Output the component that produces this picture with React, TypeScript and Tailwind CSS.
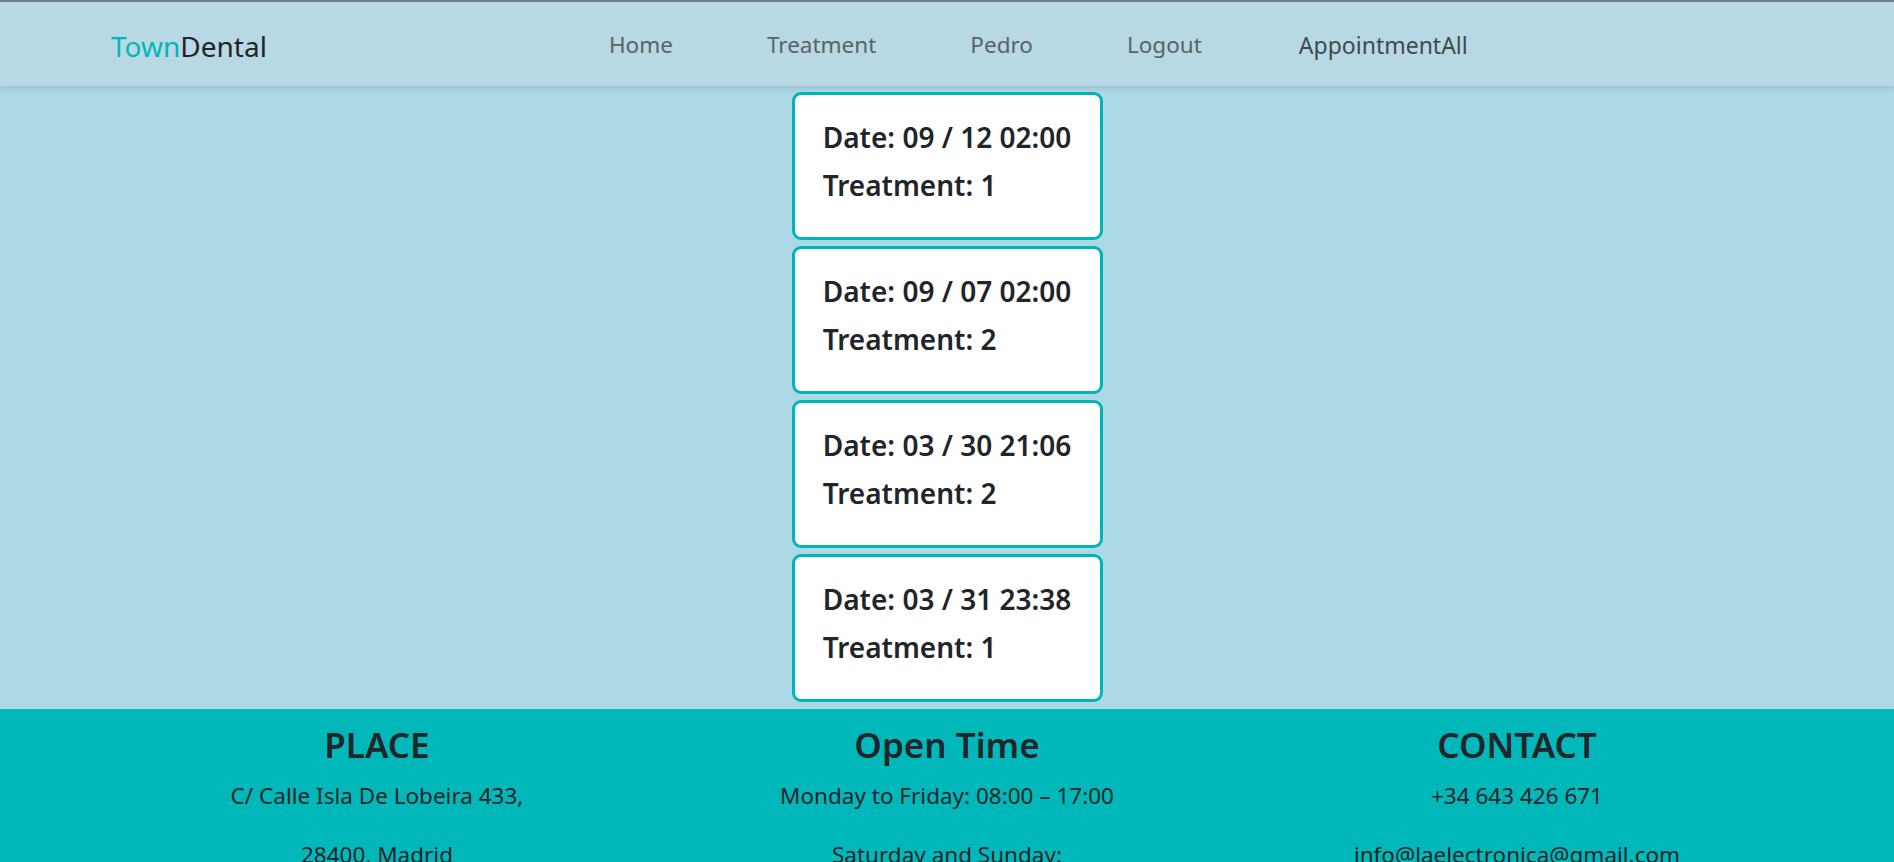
import { FC } from "react";

const font = { fontFamily: '"Noto Sans", "Open Sans", sans-serif' };

const links = ["Home", "Treatment", "Pedro", "Logout", "AppointmentAll"];

const appointments = [
  { date: "09 / 12 02:00", treatment: 1 },
  { date: "09 / 07 02:00", treatment: 2 },
  { date: "03 / 30 21:06", treatment: 2 },
  { date: "03 / 31 23:38", treatment: 1 },
];

const footerCols = [
  { title: "PLACE", lines: ["C/ Calle Isla De Lobeira 433,", "28400, Madrid"] },
  { title: "Open Time", lines: ["Monday to Friday: 08:00 – 17:00", "Saturday and Sunday:", "Closed"] },
  { title: "CONTACT", lines: ["+34 643 426 671", "info@laelectronica@gmail.com"] },
];

const Navbar: FC = () => (
  <nav className="relative z-10 flex h-[86px] items-center border-t-2 border-[#6c7f89] bg-[#b8d8e3] pt-[3px] shadow-[0_3px_5px_rgba(0,60,90,0.12)]">
    <a className="pl-[111px] text-[28px] leading-none text-[#212529]">
      <span className="text-[#00b8b9]">Town</span>Dental
    </a>
    <ul className="ml-[342px] flex gap-[94px] text-[22.5px] leading-none">
      {links.map((link) => (
        <li
          key={link}
          className={link === "AppointmentAll" ? "ml-[3px] text-[23px] text-[#3f4a50]" : "text-[#566469]"}
        >
          {link}
        </li>
      ))}
    </ul>
  </nav>
);

const AppointmentCard: FC<{ date: string; treatment: number }> = ({ date, treatment }) => (
  <div className="flex h-[148px] w-[311px] justify-center rounded-[9px] border-[3px] border-[#00b5b8] bg-white pt-[18px]">
    <div className="text-[28px] font-semibold leading-[48px] text-[#212529]">
      <div>Date: {date}</div>
      <div>Treatment: {treatment}</div>
    </div>
  </div>
);

export default function App() {
  return (
    <div className="min-h-screen bg-[#add8e6]" style={font}>
      <Navbar />
      <main className="flex flex-col items-center gap-[6px] pb-[7px] pt-[6px]">
        {appointments.map((a) => (
          <AppointmentCard key={a.date} date={a.date} treatment={a.treatment} />
        ))}
      </main>
      <footer className="grid grid-cols-3 bg-[#00b8b9] px-[92px] pt-[14px] text-center text-[#212529]">
        {footerCols.map((col) => (
          <div key={col.title}>
            <h2 className="mb-[13px] text-[35px] font-semibold leading-[43px]">{col.title}</h2>
            {col.lines.map((line) => (
              <p key={line} className="mb-[26px] text-[22.5px] leading-[33px]">
                {line}
              </p>
            ))}
          </div>
        ))}
      </footer>
    </div>
  );
}
